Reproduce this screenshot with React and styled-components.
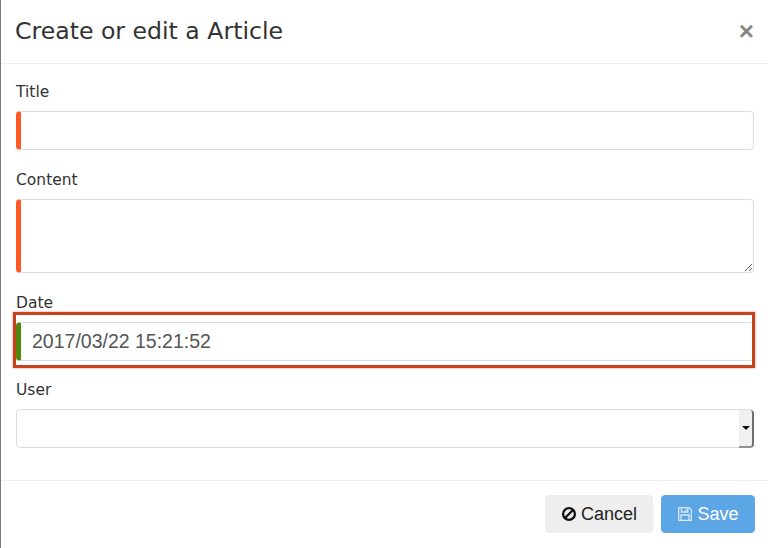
import React from "react";
import styled, { createGlobalStyle } from "styled-components";

const GlobalStyle = createGlobalStyle`
  html, body {
    margin: 0;
    padding: 0;
    background: #ffffff;
  }
  * {
    box-sizing: border-box;
  }
`;

const Modal = styled.div`
  width: 768px;
  height: 548px;
  overflow: hidden;
  background: #ffffff;
  border-left: 1px solid #7a7a7a;
  font-family: "DejaVu Sans", "Open Sans", sans-serif;
  color: #333333;
`;

const Header = styled.header`
  display: flex;
  align-items: center;
  justify-content: space-between;
  height: 64px;
  padding: 0 14px 2px 14px;
  border-bottom: 1px solid #eeeeee;
`;

const Title = styled.h4`
  margin: 0;
  font-size: 23.6px;
  font-weight: 400;
  color: #333333;
`;

const Close = styled.span`
  font-family: "Liberation Sans", sans-serif;
  font-size: 26px;
  font-weight: 700;
  line-height: 1;
  color: #888888;
`;

const Body = styled.div`
  display: flex;
  flex-direction: column;
  height: 417px;
  padding: 18px 14px 0 15px;
  border-bottom: 1px solid #eeeeee;
`;

const Group = styled.div`
  position: relative;
  display: flex;
  flex-direction: column;
  margin-bottom: ${(p) => p.$gap || 20}px;
`;

const Label = styled.label`
  height: 29px;
  font-size: 15.5px;
  line-height: 21px;
  color: #333333;
`;

const fieldBase = `
  display: block;
  width: 100%;
  border: 1px solid #dddddd;
  border-radius: 4px;
  background: #ffffff;
  outline: none;
  font-family: "Liberation Sans", sans-serif;
  font-size: 19.5px;
  color: #555555;
`;

const Input = styled.input`
  ${fieldBase}
  height: 39px;
  padding: 0 12px 1px 11px;
  border-left: 5px solid ${(p) => p.$mark};
`;

const TextArea = styled.textarea`
  ${fieldBase}
  height: 74px;
  padding: 6px 12px;
  border-left: 5px solid ${(p) => p.$mark};
  resize: vertical;
`;

const Highlight = styled.div`
  position: absolute;
  left: -3px;
  right: -1px;
  top: 19px;
  bottom: -7px;
  border: 3px solid #c9401c;
  box-shadow: 0 0 2px rgba(120, 40, 20, 0.5);
  pointer-events: none;
`;

const SelectWrap = styled.div`
  position: relative;
  height: 39px;
`;

const Select = styled.select`
  ${fieldBase}
  height: 39px;
  appearance: none;
  padding: 0 12px;
`;

const SelectArrow = styled.span`
  position: absolute;
  top: 1px;
  right: 0;
  bottom: 0;
  display: flex;
  align-items: center;
  justify-content: center;
  width: 15px;
  background: #f0f0f0;
  border-right: 2px solid #707070;
  border-bottom: 2px solid #909090;
  border-radius: 0 4px 4px 0;

  &::after {
    content: "";
    border-left: 4px solid transparent;
    border-right: 4px solid transparent;
    border-top: 4px solid #111111;
  }
`;

const Footer = styled.footer`
  display: flex;
  justify-content: flex-end;
  gap: 8px;
  padding: 14px 13px 0 0;
`;

const Button = styled.button`
  display: flex;
  align-items: center;
  justify-content: center;
  gap: 4px;
  width: ${(p) => p.$width}px;
  height: 38px;
  padding: 0;
  border: 1px solid ${(p) => (p.$primary ? "#5da6e5" : "#eeeeee")};
  border-radius: 4px;
  background: ${(p) => (p.$primary ? "#5da6e5" : "#eeeeee")};
  color: ${(p) => (p.$primary ? "#ffffff" : "#222222")};
  font-family: "Liberation Sans", sans-serif;
  font-size: 18px;

  svg {
    width: 16px;
    height: 16px;
  }
`;

const BanIcon = () => (
  <svg viewBox="0 0 16 16" fill="none" stroke="#111111" strokeWidth="2.3">
    <circle cx="8" cy="8" r="5.9" />
    <line x1="12.2" y1="3.8" x2="3.8" y2="12.2" />
  </svg>
);

const SaveIcon = () => (
  <svg viewBox="0 0 16 16" fill="none" stroke="#ffffff" strokeOpacity="0.75" strokeWidth="1.3">
    <path d="M1.7 1.7H12L14.3 4V14.3H1.7Z" strokeLinejoin="round" />
    <path d="M4.5 1.9V6H10.8V1.9M9 2.8V5" />
    <path d="M4 14.2V9H12V14.2" />
  </svg>
);

export default function App() {
  return (
    <>
      <GlobalStyle />
      <Modal>
        <Header>
          <Title>Create or edit a Article</Title>
          <Close>×</Close>
        </Header>
        <Body>
          <Group>
            <Label>Title</Label>
            <Input type="text" $mark="#ff5a26" />
          </Group>
          <Group>
            <Label>Content</Label>
            <TextArea $mark="#ff5a26" />
          </Group>
          <Group $gap={19}>
            <Label>Date</Label>
            <Input type="text" $mark="#4f8a10" defaultValue="2017/03/22 15:21:52" />
            <Highlight />
          </Group>
          <Group>
            <Label>User</Label>
            <SelectWrap>
              <Select />
              <SelectArrow />
            </SelectWrap>
          </Group>
        </Body>
        <Footer>
          <Button $width={108}>
            <BanIcon /> Cancel
          </Button>
          <Button $width={94} $primary>
            <SaveIcon /> Save
          </Button>
        </Footer>
      </Modal>
    </>
  );
}
